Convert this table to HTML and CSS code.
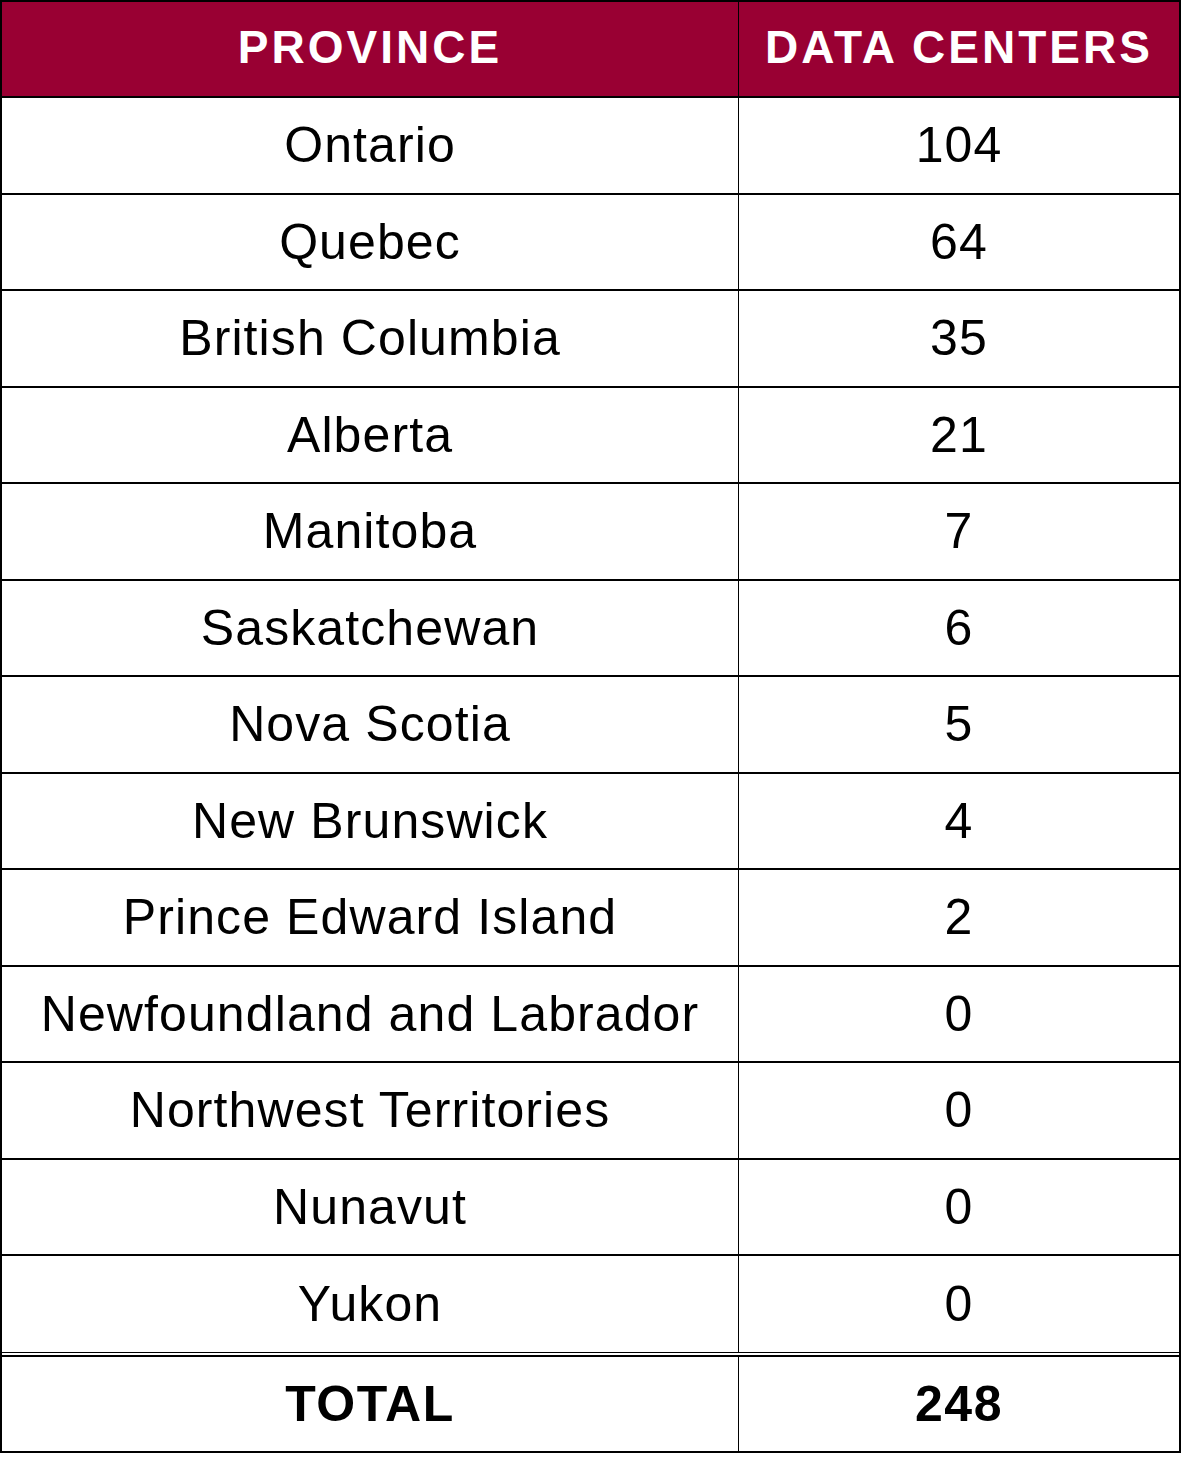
FILE: index.html
```html
<!DOCTYPE html>
<html>
<head>
<meta charset="utf-8">
<link rel="stylesheet" href="styles.css">
</head>
<body>
<div class="table">
  <div class="row head">
    <div class="cell left">PROVINCE</div>
    <div class="cell">DATA CENTERS</div>
  </div>
  <div class="row"><div class="cell left">Ontario</div><div class="cell">104</div></div>
  <div class="row"><div class="cell left">Quebec</div><div class="cell">64</div></div>
  <div class="row"><div class="cell left">British Columbia</div><div class="cell">35</div></div>
  <div class="row"><div class="cell left">Alberta</div><div class="cell">21</div></div>
  <div class="row"><div class="cell left">Manitoba</div><div class="cell">7</div></div>
  <div class="row"><div class="cell left">Saskatchewan</div><div class="cell">6</div></div>
  <div class="row"><div class="cell left">Nova Scotia</div><div class="cell">5</div></div>
  <div class="row"><div class="cell left">New Brunswick</div><div class="cell">4</div></div>
  <div class="row"><div class="cell left">Prince Edward Island</div><div class="cell">2</div></div>
  <div class="row"><div class="cell left">Newfoundland and Labrador</div><div class="cell">0</div></div>
  <div class="row"><div class="cell left">Northwest Territories</div><div class="cell">0</div></div>
  <div class="row"><div class="cell left">Nunavut</div><div class="cell">0</div></div>
  <div class="row last"><div class="cell left">Yukon</div><div class="cell">0</div></div>
  <div class="row total"><div class="cell left">TOTAL</div><div class="cell">248</div></div>
</div>
</body>
</html>
```
FILE: styles.css
```css
html, body {
  margin: 0;
  padding: 0;
  background: #ffffff;
}
.table {
  width: 1181px;
  box-sizing: border-box;
  border: 2px solid #000;
  font-family: "Liberation Sans", Arial, sans-serif;
  color: #000;
}
.row {
  display: grid;
  grid-template-columns: 737px 1fr;
  height: 96.5px;
  box-sizing: border-box;
  border-bottom: 2px solid #000;
}
.cell {
  display: flex;
  align-items: center;
  justify-content: center;
  font-size: 50px;
  letter-spacing: 1.1px;
  white-space: nowrap;
}
.left {
  border-right: 1px solid #000;
}
.head {
  height: 96px;
  background: #990033;
}
.head .cell {
  color: #fff;
  font-weight: bold;
  font-size: 46px;
  letter-spacing: 3px;
  padding-bottom: 4px;
}
.last {
  border-bottom: 1px solid #000;
}
.total {
  height: 96px;
  margin-top: 2px;
  border-top: 2px solid #000;
  border-bottom: none;
}
.total .cell {
  font-weight: bold;
  letter-spacing: 1.5px;
}
```
